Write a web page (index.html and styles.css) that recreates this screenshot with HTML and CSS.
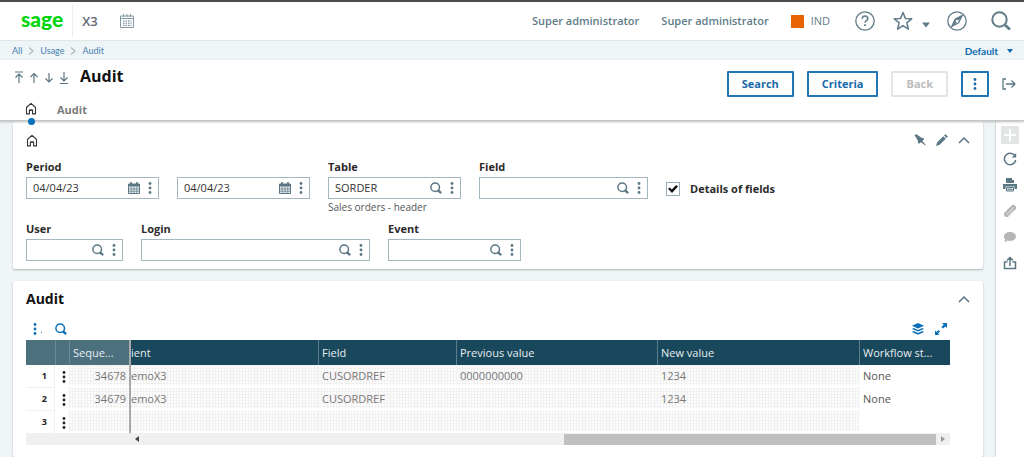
FILE: index.html
```html
<!DOCTYPE html>
<html lang="en">
<head>
<meta charset="utf-8">
<title>Audit</title>
<link rel="stylesheet" href="styles.css">
</head>
<body>
<svg class="defs" aria-hidden="true">
  <symbol id="search" viewBox="0 0 12 12"><circle cx="5.2" cy="5.2" r="4.3" fill="none" stroke="currentColor" stroke-width="1.5"/><path d="M8.4 8.8l2 1.600" stroke="currentColor" stroke-width="2.4" stroke-linecap="round"/></symbol>
  <symbol id="dots" viewBox="0 0 4 12"><circle cx="2" cy="1.5" r="1.4"/><circle cx="2" cy="6" r="1.4"/><circle cx="2" cy="10.5" r="1.4"/></symbol>
  <symbol id="cal" viewBox="0 0 12 12"><path d="M.5 2h11v9.5H.5z" fill="#e9eff1" stroke="currentColor"/><path d="M.5 2h11v2.5H.5z" fill="currentColor"/><path d="M3 0v3M9 0v3" stroke="currentColor" stroke-width="1.6"/><path d="M.5 6.9h11M.5 9.2h11M3.2 4.5v7M6 4.5v7M8.8 4.5v7" stroke="currentColor" stroke-width=".7"/></symbol>
  <symbol id="home" viewBox="0 0 12 12"><path d="M1.5 11.4V5L6 .8 10.5 5v6.4H7.6V7.6H4.4v3.8z" fill="none" stroke="currentColor" stroke-width="1.1" stroke-linejoin="round"/><path d="M4.4 7.6h3.2" stroke="currentColor"/></symbol>
  <symbol id="up" viewBox="0 0 12 8"><path d="M1 7l5-5 5 5" fill="none" stroke="currentColor" stroke-width="1.5"/></symbol>
</svg>

<header class="topbar">
  <span class="logo">sage</span>
  <span class="product">X3</span>
  <button class="icon-btn" aria-label="Calendar"><svg width="14" height="14" viewBox="0 0 14 14" fill="none" stroke="#8299a3"><path d="M.5 2h13v11.5H.5zM.5 4.5h13"/><path d="M3.5 0v3M7 0v3M10.5 0v3"/><path d="M3 7h8.500M3 9.200h8.500M3 11.300h8.500" stroke="#5d7984" stroke-dasharray="1.500 1"/></svg></button>
  <nav class="account">
    <a href="#" class="user">Super administrator</a>
    <a href="#" class="user">Super administrator</a>
    <a href="#" class="legislation"><i class="flag"></i>IND</a>
    <button class="icon-btn help" aria-label="Help"><svg width="20" height="20" viewBox="0 0 20 20" fill="none" stroke="currentColor" stroke-width="1.3"><circle cx="10" cy="10" r="9.200"/><path d="M7.200 7.700c0-3.600 5.700-3.500 5.600-.2 0 2.100-2.800 2.100-2.800 4.300" stroke-width="1.600"/><path d="M10 13.300v1.800" stroke-width="1.800"/></svg></button>
    <button class="icon-btn fav" aria-label="Favourites"><svg width="20" height="20" viewBox="0 0 20 20" fill="none" stroke="currentColor" stroke-width="1.500" stroke-linejoin="round"><path d="M10 1.500l2.400 5.900 6.300.4-4.900 4 1.600 6.400-5.400-3.500-5.400 3.500 1.600-6.400-4.900-4 6.300-.4z"/></svg><svg class="fav-caret" width="8" height="6" viewBox="0 0 8 6" fill="currentColor"><path d="M0 .5h8L4 5.500z"/></svg></button>
    <button class="icon-btn compass" aria-label="Site map"><svg width="20" height="20" viewBox="0 0 20 20" fill="none" stroke="currentColor" stroke-width="1.300"><circle cx="10" cy="10" r="9.200"/><path d="M15 4.800L11.600 11.700 5 15.200 8.400 8.300z"/><path d="M15 4.800L5 15.200 8.400 8.300z" fill="currentColor"/><circle cx="10" cy="10" r="1.200" fill="#fff" stroke="none"/></svg></button>
    <button class="icon-btn" aria-label="Search"><svg width="20" height="20" viewBox="0 0 20 20" fill="none" stroke="currentColor"><circle cx="8.500" cy="8.500" r="7.200" stroke-width="2"/><path d="M14 14l5 4.500" stroke-width="2.800"/></svg></button>
  </nav>
</header>

<div class="crumbbar">
  <nav class="crumbs">
    <a href="#">All</a>
    <svg width="6" height="8" viewBox="0 0 6 8"><path d="M1 .5L5 4 1 7.500" fill="none" stroke="#acb9ba" stroke-width="1.200"/></svg>
    <a href="#">Usage</a>
    <svg width="6" height="8" viewBox="0 0 6 8"><path d="M1 .5L5 4 1 7.500" fill="none" stroke="#acb9ba" stroke-width="1.200"/></svg>
    <a href="#">Audit</a>
  </nav>
  <button class="view">Default<svg width="6" height="4" viewBox="0 0 6 4" fill="currentColor"><path d="M0 0h6L3 4z"/></svg></button>
</div>

<section class="pagehead">
  <div class="headrow">
    <div class="pager">
      <button class="icon-btn" aria-label="First"><svg width="10" height="13" viewBox="0 0 10 13"><path d="M1 1h8M5 12V3M1.500 6.500L5 3l3.500 3.500"/></svg></button>
      <button class="icon-btn" aria-label="Previous"><svg width="10" height="13" viewBox="0 0 10 13"><path d="M5 12V2.500M1.500 6L5 2.500 8.500 6"/></svg></button>
      <button class="icon-btn" aria-label="Next"><svg width="10" height="13" viewBox="0 0 10 13"><path d="M5 2v9M1.500 7.500L5 11l3.500-3.500"/></svg></button>
      <button class="icon-btn" aria-label="Last"><svg width="10" height="13" viewBox="0 0 10 13"><path d="M1 12.500h8M5 1v9M1.500 6.500L5 10l3.500-3.500"/></svg></button>
    </div>
    <h1>Audit</h1>
    <div class="actions">
      <button class="btn">Search</button>
      <button class="btn">Criteria</button>
      <button class="btn back" disabled>Back</button>
      <button class="btn more" aria-label="More actions"><svg width="4" height="12" fill="currentColor"><use href="#dots"/></svg></button>
      <button class="icon-btn" aria-label="Exit"><svg width="14" height="12" viewBox="0 0 14 12" fill="none" stroke="currentColor" stroke-width="1.300"><path d="M4 1H1v10h3M4 6h9M9.500 2.500L13 6 9.500 9.500"/></svg></button>
    </div>
  </div>
  <nav class="tabs">
    <a href="#" class="tab active" aria-label="Home"><svg width="12" height="13"><use href="#home"/></svg></a>
    <a href="#" class="tab">Audit</a>
  </nav>
</section>

<div class="body">
  <main class="content">
    <section class="card criteria">
      <div class="cardbar">
        <svg class="home" width="12" height="13"><use href="#home"/></svg>
        <div class="tools">
          <button class="icon-btn" aria-label="Pin"><svg width="12" height="12" viewBox="0 0 12 12" fill="currentColor"><path d="M.3 1.800L2.300 0l1.500 1.200L7.500 3.800l1.700.2 1 1.200-1.900 1.700 3.500 4-.5.7-4.300-3.400-2 1.600-1.200-1.200.2-1.500L1.700 2.700z"/></svg></button>
          <button class="icon-btn" aria-label="Edit"><svg width="12" height="12" viewBox="0 0 12 12" fill="currentColor"><path d="M7.200 2.300l2.600 2.500-6.200 6L0 12l1.100-3.600zM8 1.500L9.400.2l2.500 2.400-1.400 1.500z"/></svg></button>
          <button class="icon-btn" aria-label="Collapse"><svg width="12" height="8"><use href="#up"/></svg></button>
        </div>
      </div>
      <form class="form">
        <div class="row">
          <div class="field">
            <label for="from">Period</label>
            <div class="pair">
              <div class="box w-m"><input id="from" value="04/04/23"><svg class="cal" width="12" height="12"><use href="#cal"/></svg><svg width="4" height="12"><use href="#dots"/></svg></div>
              <div class="box w-m"><input aria-label="Period end" value="04/04/23"><svg class="cal" width="12" height="12"><use href="#cal"/></svg><svg width="4" height="12"><use href="#dots"/></svg></div>
            </div>
          </div>
          <div class="field">
            <label for="table">Table</label>
            <div class="box w-m"><input id="table" value="SORDER"><svg width="12" height="12"><use href="#search"/></svg><svg width="4" height="12"><use href="#dots"/></svg></div>
            <span class="hint">Sales orders - header</span>
          </div>
          <div class="field">
            <label for="fld">Field</label>
            <div class="box w-l"><input id="fld"><svg width="12" height="12"><use href="#search"/></svg><svg width="4" height="12"><use href="#dots"/></svg></div>
          </div>
          <div class="check"><input type="checkbox" id="details" checked><label for="details">Details of fields</label></div>
        </div>
        <div class="row">
          <div class="field">
            <label for="user">User</label>
            <div class="box w-s"><input id="user"><svg width="12" height="12"><use href="#search"/></svg><svg width="4" height="12"><use href="#dots"/></svg></div>
          </div>
          <div class="field">
            <label for="login">Login</label>
            <div class="box w-xl"><input id="login"><svg width="12" height="12"><use href="#search"/></svg><svg width="4" height="12"><use href="#dots"/></svg></div>
          </div>
          <div class="field">
            <label for="event">Event</label>
            <div class="box w-m"><input id="event"><svg width="12" height="12"><use href="#search"/></svg><svg width="4" height="12"><use href="#dots"/></svg></div>
          </div>
        </div>
      </form>
    </section>

    <section class="card results">
      <div class="results-head">
        <h2>Audit</h2>
        <button class="icon-btn" aria-label="Collapse"><svg width="12" height="8"><use href="#up"/></svg></button>
      </div>
      <div class="gridwrap">
        <div class="gridtools">
          <button class="icon-btn menu" aria-label="Grid menu"><svg width="4" height="12" fill="currentColor"><use href="#dots"/></svg><i></i></button>
          <button class="icon-btn" aria-label="Search in grid"><svg width="12" height="12"><use href="#search"/></svg></button>
          <span class="spring"></span>
          <button class="icon-btn" aria-label="Layers"><svg width="12" height="12" viewBox="0 0 12 12" fill="currentColor"><path d="M6 0l6 2.800-6 2.800-6-2.800z"/><path d="M1.800 5L6 6.900 10.200 5l1.800.9-6 2.700-6-2.700z"/><path d="M1.800 8L6 9.900 10.200 8l1.800.9L6 11.700 0 8.900z"/></svg></button>
          <button class="icon-btn" aria-label="Full screen"><svg width="12" height="12" viewBox="0 0 12 12" fill="currentColor"><path d="M12 0v5L10.300 3.400 8 5.600 6.500 4 8.700 1.800 7 0zM0 12V7.500l1.500 1.400 2-2L5 8.400l-2 2L4.600 12z"/></svg></button>
        </div>
        <table class="grid">
          <colgroup><col class="c-num"><col class="c-dots"><col class="c-seq"><col class="c-client"><col class="c-field"><col class="c-prev"><col class="c-new"><col class="c-wf"></colgroup>
          <thead>
            <tr><th class="fixed"></th><th class="fixed"></th><th class="fixed seq">Seque...</th><th class="cut">ient</th><th>Field</th><th>Previous value</th><th>New value</th><th>Workflow st...</th></tr>
          </thead>
          <tbody>
            <tr><td class="num">1</td><td class="act"><svg width="4" height="12"><use href="#dots"/></svg></td><td class="ro seq">34678</td><td class="ro cut">emoX3</td><td class="ro">CUSORDREF</td><td class="ro">0000000000</td><td class="ro">1234</td><td class="wf">None</td></tr>
            <tr><td class="num">2</td><td class="act"><svg width="4" height="12"><use href="#dots"/></svg></td><td class="ro seq">34679</td><td class="ro cut">emoX3</td><td class="ro">CUSORDREF</td><td class="ro"></td><td class="ro">1234</td><td class="wf">None</td></tr>
            <tr><td class="num">3</td><td class="act"><svg width="4" height="12"><use href="#dots"/></svg></td><td class="ro seq"></td><td class="ro cut"></td><td class="ro"></td><td class="ro"></td><td class="ro"></td><td class="wf"></td></tr>
          </tbody>
        </table>
        <div class="scroll">
          <svg width="4" height="6" viewBox="0 0 4 6" fill="#444"><path d="M4 0v6L0 3z"/></svg>
          <div class="track"><div class="thumb"></div></div>
          <svg width="4" height="6" viewBox="0 0 4 6" fill="#999"><path d="M0 0v6l4-3z"/></svg>
        </div>
      </div>
    </section>
  </main>

  <aside class="rail">
    <button class="icon-btn add" aria-label="New"><svg width="12" height="12" viewBox="0 0 12 12"><path d="M6 0v12M0 6h12" stroke="#fff" stroke-width="2"/></svg></button>
    <button class="icon-btn" aria-label="Refresh"><svg width="14" height="14" viewBox="0 0 14 14"><path d="M11.800 3.700A5.700 5.700 0 1 0 12.700 8" fill="none" stroke="currentColor" stroke-width="1.500"/><path d="M13.200 1v4.500H8.700z" fill="currentColor"/></svg></button>
    <button class="icon-btn" aria-label="Print"><svg width="14" height="14" viewBox="0 0 14 14" fill="currentColor"><path d="M3 0h6v2h2v3H3zM0 6h14v5h-2.500V8.500h-9V11H0z"/><path d="M3.500 9.500h7V13h-7z" fill="#dfe7ea" stroke="currentColor"/><path d="M4.500 11.300h5" stroke="currentColor"/></svg></button>
    <button class="icon-btn off" aria-label="Attachments"><svg width="14" height="14" viewBox="0 0 14 14" fill="none" stroke="currentColor" stroke-linecap="round"><path d="M3.800 10.200l6.500-6.500" stroke-width="5.500"/><path d="M4 10l6.800-6.600M5.500 11.300l5-5" stroke="#eee" stroke-width=".8"/></svg></button>
    <button class="icon-btn off" aria-label="Comments"><svg width="14" height="12" viewBox="0 0 14 12" fill="currentColor"><path d="M7 1c3.500 0 6 2 6 4.600S10.500 10 7 10c-1 0-1.800-.1-2.600-.4C3.500 10.600 2.300 11 1 11c.7-.7 1-1.500 1-2.400C1.300 7.800.9 6.700.9 5.600.9 3 3.500 1 7 1z"/></svg></button>
    <button class="icon-btn" aria-label="Share"><svg width="14" height="14" viewBox="0 0 14 14" fill="none" stroke="currentColor" stroke-width="1.500"><path d="M4.500 6H1.500v6.500h11V6h-3M7 10V2M4 4.500l3-3 3 3"/></svg></button>
  </aside>
</div>
</body>
</html>
```

FILE: styles.css
```css
* { box-sizing: border-box; }
body {
  margin: 0;
  min-height: 100vh;
  display: flex;
  flex-direction: column;
  background: #eff4f6;
  color: #333;
  font: 11px/16px "Open Sans", "Noto Sans", sans-serif;
  overflow: hidden;
}
svg { display: block; flex: none; }
.defs { width: 0; height: 0; position: absolute; }
a { color: inherit; text-decoration: none; }
button, input { font: inherit; color: inherit; }
.icon-btn { border: 0; padding: 0; background: none; color: #5b7784; display: flex; align-items: center; }

.topbar {
  display: flex;
  align-items: center;
  height: 41px;
  padding: 0 13px 0 21px;
  background: #fff;
  border-top: 2px solid #4b4b4b;
  border-bottom: 1px solid #e1e6e8;
}
.logo { font: 900 21px/28px Lato, sans-serif; color: #00d60b; padding: 0 9px 4px 0; border-right: 1px solid #eee; }
.product { margin: 0 22px 0 9px; font-size: 13px; font-weight: 600; color: #606870; }
.account { display: flex; align-items: center; margin-left: auto; color: #607c88; font-weight: 600; }
.account .icon-btn { color: #607c88; }
.user { margin-right: 22px; }
.legislation { display: flex; align-items: center; gap: 7px; font-weight: 400; margin-right: 25px; }
.flag { width: 13px; height: 13px; background: #e96400; }
.help { margin-right: 18px; }
.fav { gap: 9px; margin-right: 17px; }
.fav-caret { margin-top: 8px; }
.compass { margin-right: 24px; }

.crumbbar { display: flex; justify-content: space-between; align-items: center; height: 19px; padding: 0 11px 0 12px; background: #eff4f6; }
.crumbs { display: flex; align-items: center; gap: 6px; font: 9px/12px Lato, sans-serif; color: #4682b4; }
.view { display: flex; align-items: center; gap: 9px; border: 0; padding: 0; background: none; font: bold 10px/12px Lato, sans-serif; color: #0b6ab0; }

.pagehead { position: relative; z-index: 1; background: #fff; border-bottom: 1px solid #c4c6c7; box-shadow: 0 1px 2px #bbb; }
.headrow { display: flex; align-items: flex-start; padding: 5px 8px 0 14px; height: 38px; }
.pager { display: flex; gap: 5px; padding-top: 6px; }
.pager svg { fill: none; stroke: #5b7784; stroke-width: 1.2; }
h1 { margin: 0 0 0 11px; font-size: 16px; line-height: 22px; font-weight: 700; color: #111; }
.actions { display: flex; align-items: center; gap: 13px; margin: 6px 0 0 auto; }
.btn { height: 26px; padding: 0 13px; border: 2px solid #1f76b5; border-radius: 1px; background: #fff; color: #1769aa; font-weight: 700; }
.back { border-color: #e5e5e5; color: #bbb; }
.more { padding: 0 10px; }
.tabs { display: flex; gap: 20px; padding: 0 25px; height: 22px; font-weight: 700; color: #7b7b7b; }
.tab { position: relative; line-height: 24px; }
.active { color: #333; padding-top: 4px; }
.active::after { content: ""; position: absolute; left: 3px; bottom: -5px; width: 7px; height: 7px; border-radius: 50%; background: #0871b9; }

.body { flex: 1; display: flex; }
.content { flex: 1; min-width: 0; padding: 0 12px 0 13px; display: flex; flex-direction: column; gap: 12px; }
.card { background: #fff; box-shadow: 0 1px 2px #aeb4b6; border-radius: 2px; }
.criteria { padding: 12px 13px 8px; }
.cardbar { display: flex; justify-content: space-between; align-items: center; height: 14px; color: #333; }
.tools { display: flex; gap: 10px; }
.form { margin-top: 12px; }
.row { display: flex; gap: 18px; height: 62px; }
.row + .row { height: 40px; }
.field label, .check label { font-weight: 700; color: #2b2b2b; }
.field label { display: block; line-height: 16px; margin-bottom: 2px; }
.pair { display: flex; gap: 18px; }
.box { display: flex; align-items: center; gap: 8px; height: 22px; padding: 0 6px; border: 1px solid #a4b6be; background: #fff; fill: #5b7784; color: #5b7784; }
.box input { flex: 1; min-width: 0; border: 0; padding: 0; outline: 0; background: none; color: #333; }
.w-s { width: 97px; }
.w-m { width: 133px; }
.w-l { width: 169px; }
.w-xl { width: 229px; }
.hint { display: block; font-size: 10px; color: #555; }
.check { display: flex; align-items: center; gap: 10px; height: 22px; margin-top: 19px; }
.check input { appearance: none; display: block; width: 14px; height: 14px; margin: 0; border: 1px solid #9aaeb7; background: #fff; }
.check input:checked::after { content: ""; display: block; width: 10px; height: 8px; margin: 2px 1px; background: #111; clip-path: polygon(0 48%, 18% 30%, 38% 55%, 82% 0, 100% 18%, 40% 100%); }

.results { flex: 1; padding: 7px 13px; }
.results-head { display: flex; justify-content: space-between; align-items: center; height: 22px; }
h2 { margin: 0; font-size: 14px; line-height: 20px; font-weight: 700; color: #111; }
.gridwrap { padding-right: 20px; }
.gridtools { display: flex; align-items: center; gap: 11px; height: 30px; padding: 8px 3px 0 7px; }
.gridtools .icon-btn { color: #0b6fb7; }
.gridtools .menu { gap: 4px; margin-right: 2px; }
.menu i { width: 1px; height: 1px; margin-top: 6px; background: #0b6fb7; }
.spring { flex: 1; }
.grid { width: 100%; table-layout: fixed; border-collapse: separate; border-spacing: 0; }
.c-num { width: 29px; }
.c-dots { width: 14px; }
.c-seq { width: 62px; }
.c-client { width: 187px; }
.c-field { width: 138px; }
.c-prev { width: 201px; }
.c-new { width: 202px; }
.grid th { height: 25px; padding: 0 4px 0 3px; background: #19475b; color: #e7eef1; font-weight: 400; text-align: left; border-left: 1px solid #5c7d8a; white-space: nowrap; overflow: hidden; }
.grid th.fixed { background: #4c707e; border-left-color: #6d8a96; }
.grid th.fixed:first-child { border-left: 0; }
.grid td { height: 23px; padding: 0 4px; line-height: 18px; color: #555; white-space: nowrap; overflow: hidden; }
.grid .seq { border-right: 2px solid #aaa; }
.grid td.seq { text-align: right; padding-right: 3px; }
.grid .cut { padding-left: 0; border-left: 0; }
.grid td.num { text-align: right; font-size: 9px; font-weight: 700; color: #222; padding-right: 7px; border-bottom: 1px solid #f0f0f0; border-right: 1px solid #f0f0f0; }
.grid td.act { padding-left: 7px; fill: #222; }
.grid td.wf { padding-bottom: 2px; }
.grid td.ro {
  color: #777;
  background:
    linear-gradient(#fff, #fff) 0 100% / 100% 3px no-repeat,
    repeating-linear-gradient(90deg, #f0f0f0 0 1px, transparent 1px 3px),
    repeating-linear-gradient(#f2f2f2 0 1px, #fdfdfd 1px 3px);
  padding-bottom: 1px;
}
.scroll { display: flex; align-items: center; gap: 5px; height: 12px; margin-top: -1px; padding: 0 5px 0 109px; background: #f0f0f0; }
.track { flex: 1; display: flex; justify-content: flex-end; }
.thumb { width: 47%; height: 11px; background: #bfbfbf; }

.rail { width: 29px; padding: 5px 0; display: flex; flex-direction: column; align-items: center; gap: 12px; background: #fff; border-left: 1px solid #d5dadc; }
.rail .icon-btn { height: 14px; }
.rail .add { width: 18px; height: 18px; justify-content: center; background: #e2e5e6; margin-bottom: -4px; }
.rail .off { color: #b5b5b5; }
```
